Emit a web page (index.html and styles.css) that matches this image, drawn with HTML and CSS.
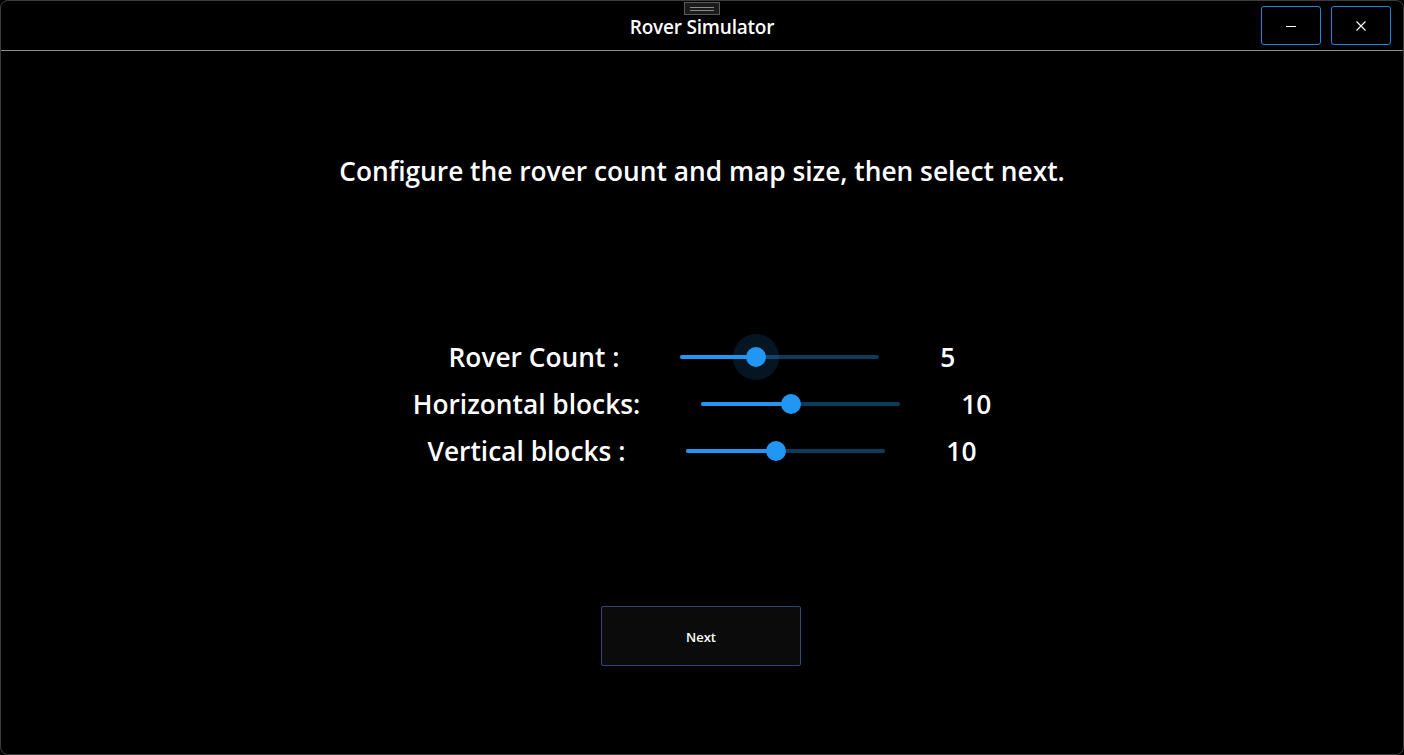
FILE: index.html
```html
<!DOCTYPE html>
<html>
<head>
<meta charset="utf-8">
<title>Rover Simulator</title>
<link rel="stylesheet" href="styles.css">
</head>
<body>
<div class="window">
  <div class="grip"><span></span><span></span></div>
  <header class="titlebar">
    <div class="title">Rover Simulator</div>
    <div class="controls">
      <button class="ctl" aria-label="Minimize">
        <svg width="10" height="10" viewBox="0 0 10 10"><path d="M0 5.5h10" stroke="#fff" stroke-width="1"/></svg>
      </button>
      <button class="ctl" aria-label="Close">
        <svg width="10" height="10" viewBox="0 0 10 10"><path d="M0.5 0.5l9 9M9.5 0.5l-9 9" stroke="#fff" stroke-width="1.1"/></svg>
      </button>
    </div>
  </header>
  <main class="content">
    <h1 class="heading">Configure the rover count and map size, then select next.</h1>
    <div class="settings">
      <div class="row">
        <span class="label">Rover Count :</span>
        <div class="slider">
          <div class="track"><div class="fill" style="width:38%"></div></div>
          <div class="thumb hover" style="left:38%"></div>
        </div>
        <span class="value">5</span>
      </div>
      <div class="row">
        <span class="label">Horizontal blocks:</span>
        <div class="slider">
          <div class="track"><div class="fill" style="width:45%"></div></div>
          <div class="thumb" style="left:45%"></div>
        </div>
        <span class="value">10</span>
      </div>
      <div class="row">
        <span class="label">Vertical blocks :</span>
        <div class="slider">
          <div class="track"><div class="fill" style="width:45%"></div></div>
          <div class="thumb" style="left:45%"></div>
        </div>
        <span class="value">10</span>
      </div>
    </div>
    <button class="next">Next</button>
  </main>
</div>
</body>
</html>
```
FILE: styles.css
```css
* { box-sizing: border-box; }
html, body {
  margin: 0;
  padding: 0;
  background: #000;
  width: 1404px;
  height: 755px;
  overflow: hidden;
}
body {
  font-family: "Open Sans", "Noto Sans", sans-serif;
  color: #fff;
}
.window {
  position: relative;
  width: 1404px;
  height: 755px;
  border: 1px solid #3c3c3c;
  border-radius: 8px;
  background: #000;
  display: flex;
  flex-direction: column;
}
.grip {
  position: absolute;
  left: 683px;
  top: 1px;
  width: 36px;
  height: 13px;
  background: #1b1b1b;
  border: 1px solid #5a5a5a;
  display: flex;
  flex-direction: column;
  justify-content: center;
  align-items: center;
  gap: 2px;
}
.grip span {
  display: block;
  width: 24px;
  height: 1px;
  background: #8a8a8a;
}
.titlebar {
  height: 50px;
  flex: none;
  border-bottom: 1px solid #8c8c8c;
  display: flex;
  align-items: center;
  justify-content: center;
  position: relative;
}
.title {
  font-size: 19px;
  font-weight: 600;
  letter-spacing: -0.2px;
  margin-top: 3px;
}
.controls {
  position: absolute;
  right: 12px;
  top: 5px;
  display: flex;
  gap: 10px;
}
.ctl {
  width: 60px;
  height: 39px;
  background: #000;
  border: 1px solid #1f86e0;
  border-radius: 3px;
  display: flex;
  align-items: center;
  justify-content: center;
  padding: 0;
}
.content {
  flex: 1;
  display: flex;
  flex-direction: column;
  align-items: center;
}
.heading {
  margin: 101px 0 0;
  font-size: 26.3px;
  font-weight: 600;
  letter-spacing: 0;
  line-height: 38px;
}
.settings {
  margin-top: 148px;
  display: flex;
  flex-direction: column;
  align-items: center;
  gap: 9px;
}
.row {
  display: flex;
  align-items: center;
  height: 38px;
}
.label, .value {
  font-size: 26.3px;
  font-weight: 600;
  letter-spacing: 0;
}
.slider {
  position: relative;
  width: 199px;
  height: 38px;
  margin: 0 61px;
  display: flex;
  align-items: center;
}
.track {
  width: 100%;
  height: 4px;
  border-radius: 2px;
  background: #0e3a5c;
  overflow: hidden;
}
.fill {
  height: 100%;
  background: #2196f3;
}
.thumb {
  position: absolute;
  top: 50%;
  width: 20px;
  height: 20px;
  margin: -10px 0 0 -10px;
  border-radius: 50%;
  background: #2196f3;
}
.thumb.hover {
  box-shadow: 0 0 0 13px rgba(33, 150, 243, 0.14);
}
.next {
  margin-top: 136px;
  margin-right: 2px;
  width: 200px;
  height: 60px;
  padding-top: 3px;
  background: #0b0b0b;
  border: 1px solid #2b4a78;
  border-radius: 2px;
  color: #fff;
  font-family: "Open Sans", "Noto Sans", sans-serif;
  font-size: 13px;
  font-weight: 600;
}
```
